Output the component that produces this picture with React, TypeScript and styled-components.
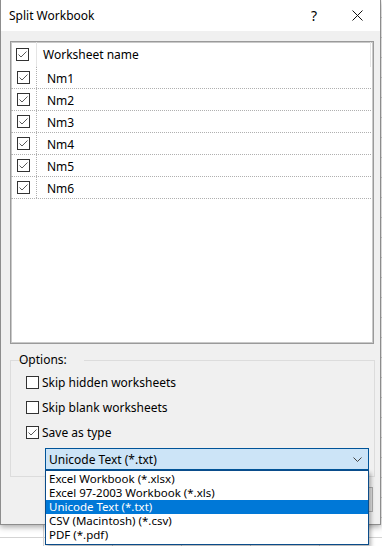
import React from 'react'
import styled, { createGlobalStyle } from 'styled-components'

const GlobalStyle = createGlobalStyle`
  html, body {
    margin: 0;
    padding: 0;
  }
  body {
    width: 382px;
    height: 546px;
    overflow: hidden;
    font-family: 'Noto Sans', 'Liberation Sans', sans-serif;
    font-size: 11.5px;
    color: #000;
    background-color: #fff;
    background-image:
      linear-gradient(to right, #d4d4d4 1px, transparent 1px),
      linear-gradient(to bottom, #d4d4d4 1px, transparent 1px);
    background-size: 69px 20px;
    background-position: 43px 537px;
  }
`

const Dialog = styled.div`
  position: relative;
  width: 381px;
  height: 525px;
  box-sizing: border-box;
  background: #f0f0f0;
  border: 1px solid #8d8d8d;
  border-top: none;
  box-shadow: 0 2px 6px rgba(0, 0, 0, 0.35);
  display: flex;
  flex-direction: column;
`

const TitleBar = styled.div`
  height: 31px;
  flex: none;
  background: #fff;
  display: flex;
  align-items: center;
  padding-left: 8px;
  font-size: 12px;
`

const Title = styled.div`
  flex: 1;
`

const HelpButton = styled.div`
  width: 46px;
  padding-left: 6px;
  box-sizing: border-box;
  text-align: center;
  font-size: 14px;
`

const CloseButton = styled.div`
  width: 46px;
  height: 31px;
  display: flex;
  align-items: center;
  justify-content: center;
`

const Body = styled.div`
  flex: 1;
  display: flex;
  flex-direction: column;
  padding: 10px 6px 0 8px;
`

const ListBox = styled.div`
  margin-left: 1px;
  width: 364px;
  height: 303px;
  box-sizing: border-box;
  background: #fff;
  border: 1px solid #9a9a9a;
  box-shadow: inset 0 0 0 1px #c9c9c9;
`

const HeaderRow = styled.div`
  display: flex;
  height: 25px;
  align-items: stretch;
`

const HeaderCheckCell = styled.div`
  width: 26px;
  box-sizing: border-box;
  border-right: 1px solid #e5e5e5;
  display: flex;
  align-items: center;
  padding-left: 5px;
`

const HeaderName = styled.div`
  flex: 1;
  display: flex;
  align-items: center;
  padding-left: 6px;
  margin-right: 2px;
  border-right: 1px solid #e5e5e5;
  font-size: 12px;
`

const Row = styled.div`
  display: flex;
  height: 22px;
  box-sizing: border-box;
  border-bottom: 1px dotted #b0b0b0;
  margin-right: 2px;
`

const CheckCell = styled.div`
  width: 26px;
  box-sizing: border-box;
  border-right: 1px dotted #b0b0b0;
  display: flex;
  align-items: center;
  justify-content: center;
`

const NameCell = styled.div`
  flex: 1;
  display: flex;
  align-items: center;
  padding: 1px 0 0 10px;
  font-size: 12px;
`

const Box = styled.span`
  width: 13px;
  height: 13px;
  box-sizing: border-box;
  border: 1px solid #333;
  background: #fff;
  display: inline-flex;
  flex: none;
`

const Group = styled.fieldset`
  margin: 8px 0 0 1px;
  width: 365px;
  box-sizing: border-box;
  border: 1px solid #dcdcdc;
  padding: 0 0 6px 15px;
`

const Legend = styled.legend`
  margin-left: 6px;
  padding: 0 2px;
  font-size: 12px;
  line-height: 16px;
  position: relative;
  left: -15px;
`

const OptionRow = styled.label`
  display: flex;
  align-items: center;
  gap: 3px;
  height: 25px;
  font-size: 12px;
`

const Options = styled.div`
  display: flex;
  flex-direction: column;
  padding-top: 2px;
`

const ComboWrap = styled.div`
  position: relative;
  margin: 3px 0 0 19px;
  width: 324px;
`

const Combo = styled.div`
  height: 22px;
  box-sizing: border-box;
  border: 1px solid #005499;
  background: #cce4f7;
  display: flex;
  align-items: center;
  padding: 0 6px 0 3px;
  font-size: 12px;
`

const ComboText = styled.span`
  flex: 1;
`

const DropList = styled.div`
  position: absolute;
  top: 100%;
  left: 0;
  right: 0;
  z-index: 2;
  box-sizing: border-box;
  background: #fff;
  border: 1px solid #0a4c8a;
  box-shadow: 2px 3px 4px rgba(0, 0, 0, 0.3);
  padding: 1px 0 2px;
`

const DropItem = styled.div<{ $active?: boolean }>`
  height: 14px;
  line-height: 14px;
  overflow: hidden;
  padding-left: 3px;
  font-size: 11.5px;
  background: ${p => (p.$active ? '#0078d7' : 'transparent')};
  color: ${p => (p.$active ? '#fff' : '#000')};
`

const ButtonRow = styled.div`
  display: flex;
  justify-content: flex-end;
  gap: 10px;
  margin-top: 10px;
  padding-right: 1px;
`

const Button = styled.div`
  width: 75px;
  height: 25px;
  box-sizing: border-box;
  border: 1px solid #adadad;
  background: #e1e1e1;
  display: flex;
  align-items: center;
  justify-content: center;
  font-size: 12px;
`

const Check = ({ checked }: { checked: boolean }) => (
  <Box>
    {checked && (
      <svg width="11" height="11" viewBox="0 0 11 11">
        <path d="M1.5 5.5 L4 8 L9.5 2.5" fill="none" stroke="#5a5a5a" strokeWidth="1" />
      </svg>
    )}
  </Box>
)

const sheets = ['Nm1', 'Nm2', 'Nm3', 'Nm4', 'Nm5', 'Nm6']
const types = [
  'Excel Workbook (*.xlsx)',
  'Excel 97-2003 Workbook (*.xls)',
  'Unicode Text (*.txt)',
  'CSV (Macintosh) (*.csv)',
  'PDF (*.pdf)',
]

const App = () => {
  return (
    <>
      <GlobalStyle />
      <Dialog>
        <TitleBar>
          <Title>Split Workbook</Title>
          <HelpButton>?</HelpButton>
          <CloseButton>
            <svg width="11" height="11" viewBox="0 0 11 11">
              <path d="M0.5 0.5 L10.5 10.5 M10.5 0.5 L0.5 10.5" stroke="#111" strokeWidth="1" />
            </svg>
          </CloseButton>
        </TitleBar>
        <Body>
          <ListBox>
            <HeaderRow>
              <HeaderCheckCell>
                <Check checked />
              </HeaderCheckCell>
              <HeaderName>Worksheet name</HeaderName>
            </HeaderRow>
            {sheets.map(s => (
              <Row key={s}>
                <CheckCell>
                  <Check checked />
                </CheckCell>
                <NameCell>{s}</NameCell>
              </Row>
            ))}
          </ListBox>
          <Group>
            <Legend>Options:</Legend>
            <Options>
              <OptionRow>
                <Check checked={false} />
                Skip hidden worksheets
              </OptionRow>
              <OptionRow>
                <Check checked={false} />
                Skip blank worksheets
              </OptionRow>
              <OptionRow>
                <Check checked />
                Save as type
              </OptionRow>
            </Options>
            <ComboWrap>
              <Combo>
                <ComboText>Unicode Text (*.txt)</ComboText>
                <svg width="9" height="5" viewBox="0 0 9 5">
                  <path d="M0.5 0.5 L4.5 4.5 L8.5 0.5" fill="none" stroke="#444" strokeWidth="1" />
                </svg>
              </Combo>
              <DropList>
                {types.map(t => (
                  <DropItem key={t} $active={t === 'Unicode Text (*.txt)'}>
                    {t}
                  </DropItem>
                ))}
              </DropList>
            </ComboWrap>
          </Group>
          <ButtonRow>
            <Button>OK</Button>
            <Button>Cancel</Button>
          </ButtonRow>
        </Body>
      </Dialog>
    </>
  )
}

export default App
